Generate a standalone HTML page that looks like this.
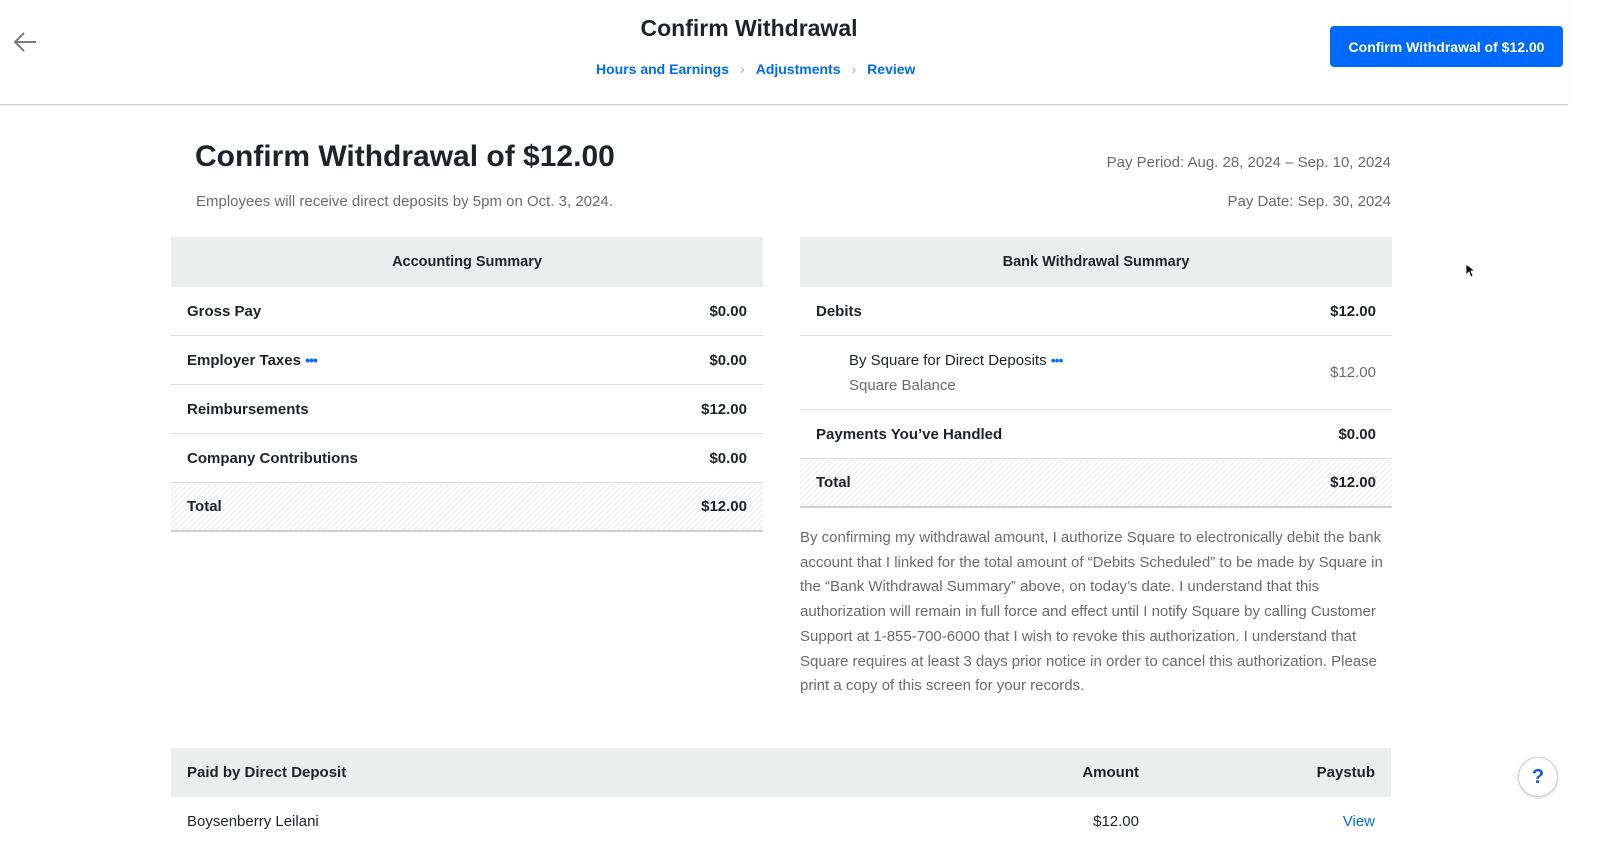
<!DOCTYPE html>
<html><head><meta charset="utf-8"><style>
*{box-sizing:border-box;margin:0;padding:0}
body{width:1600px;height:847px;overflow:hidden;background:#fff;font-family:"Liberation Sans",sans-serif;color:#1f2328;position:relative}
.a{position:absolute}
.hdr{left:0;top:0;width:1568px;height:105px;border-bottom:1px solid #d0d0d0;box-shadow:0 1px 2px rgba(0,0,0,.08)}
.blue{color:#006aff}
.tbl{position:absolute;width:592px}
.th{height:50px;background:#eceded;font-size:14.5px;font-weight:bold;display:flex;align-items:center;justify-content:center;color:#1f2328}
.row{height:49px;border-bottom:1px solid #dcdcdc;display:flex;align-items:center;justify-content:space-between;padding:0 16px;font-size:15px;font-weight:bold;color:#1f2328}
.tot{background:repeating-linear-gradient(135deg,#f5f5f5 0 2px,#fbfbfb 2px 4px);border-bottom:2px solid #cfcfcf}
.dots{color:#006aff;letter-spacing:-1px;font-size:14px}
.gray{color:#6b6b6b}
</style></head><body>
<div class="a hdr">
<svg class="a" style="left:12px;top:30px" width="26" height="24" viewBox="0 0 26 24"><path d="M24 12H3M12 3L3 12l9 9" fill="none" stroke="#7a7a7a" stroke-width="2"/></svg>
<div class="a" style="left:0;width:1498px;top:15px;text-align:center;font-size:23px;font-weight:bold;color:#1f2328">Confirm Withdrawal</div>
<div class="a" style="left:596px;top:61px;font-size:14px;font-weight:bold" ><span class="blue">Hours and Earnings</span><span style="color:#aaa;margin:0 11px;font-weight:normal">›</span><span class="blue">Adjustments</span><span style="color:#aaa;margin:0 11px;font-weight:normal">›</span><span class="blue">Review</span></div>
<div class="a" style="left:1330px;top:26px;width:233px;height:41px;background:#006aff;border-radius:4px;color:#fff;font-size:14px;font-weight:bold;display:flex;align-items:center;justify-content:center">Confirm Withdrawal of $12.00</div>
</div>
<div class="a" style="left:195px;top:140px;font-size:30px;font-weight:bold">Confirm Withdrawal of $12.00</div>
<div class="a gray" style="left:196px;top:193px;font-size:15px">Employees will receive direct deposits by 5pm on Oct. 3, 2024.</div>
<div class="a gray" style="right:209px;top:154px;font-size:15px">Pay Period: Aug. 28, 2024 – Sep. 10, 2024</div>
<div class="a gray" style="right:209px;top:193px;font-size:15px">Pay Date: Sep. 30, 2024</div>

<div class="tbl" style="left:171px;top:237px">
<div class="th">Accounting Summary</div>
<div class="row"><span>Gross Pay</span><span>$0.00</span></div>
<div class="row"><span>Employer Taxes <span class="dots">•••</span></span><span>$0.00</span></div>
<div class="row"><span>Reimbursements</span><span>$12.00</span></div>
<div class="row"><span>Company Contributions</span><span>$0.00</span></div>
<div class="row tot"><span>Total</span><span>$12.00</span></div>
</div>

<div class="tbl" style="left:800px;top:237px">
<div class="th">Bank Withdrawal Summary</div>
<div class="row"><span>Debits</span><span>$12.00</span></div>
<div class="row" style="height:74px;font-weight:normal;padding-left:49px"><span style="line-height:25px">By Square for Direct Deposits <span class="dots">•••</span><br><span class="gray">Square Balance</span></span><span class="gray">$12.00</span></div>
<div class="row"><span>Payments You’ve Handled</span><span>$0.00</span></div>
<div class="row tot"><span>Total</span><span>$12.00</span></div>
</div>

<div class="a gray" style="left:800px;top:526px;width:595px;font-size:15px;line-height:24.7px">By confirming my withdrawal amount, I authorize Square to electronically debit the bank account that I linked for the total amount of “Debits Scheduled” to be made by Square in the “Bank Withdrawal Summary” above, on today’s date. I understand that this authorization will remain in full force and effect until I notify Square by calling Customer Support at 1-855-700-6000 that I wish to revoke this authorization. I understand that Square requires at least 3 days prior notice in order to cancel this authorization. Please print a copy of this screen for your records.</div>

<div class="a" style="left:171px;top:748px;width:1220px;height:49px;background:#eceded;font-size:15px;font-weight:bold">
<span class="a" style="left:16px;top:16px">Paid by Direct Deposit</span>
<span class="a" style="right:252px;top:16px">Amount</span>
<span class="a" style="right:16px;top:16px">Paystub</span>
</div>
<div class="a" style="left:187px;top:813px;font-size:15px">Boysenberry Leilani</div>
<div class="a" style="right:461px;top:813px;font-size:15px">$12.00</div>
<div class="a blue" style="right:225px;top:813px;font-size:15px">View</div>

<div class="a" style="left:1518px;top:757px;width:40px;height:40px;border-radius:50%;border:1px solid #ccc;box-shadow:0 1px 3px rgba(0,0,0,.15);display:flex;align-items:center;justify-content:center;color:#0a5bd6;font-weight:bold;font-size:20px;background:#fff">?</div>
<svg class="a" style="left:1465px;top:263px" width="10" height="15" viewBox="0 0 10 15"><path d="M1 1v11l3-3 2 5 2-1-2-5h4z" fill="#000" stroke="#fff" stroke-width=".8"/></svg>
</body></html>
